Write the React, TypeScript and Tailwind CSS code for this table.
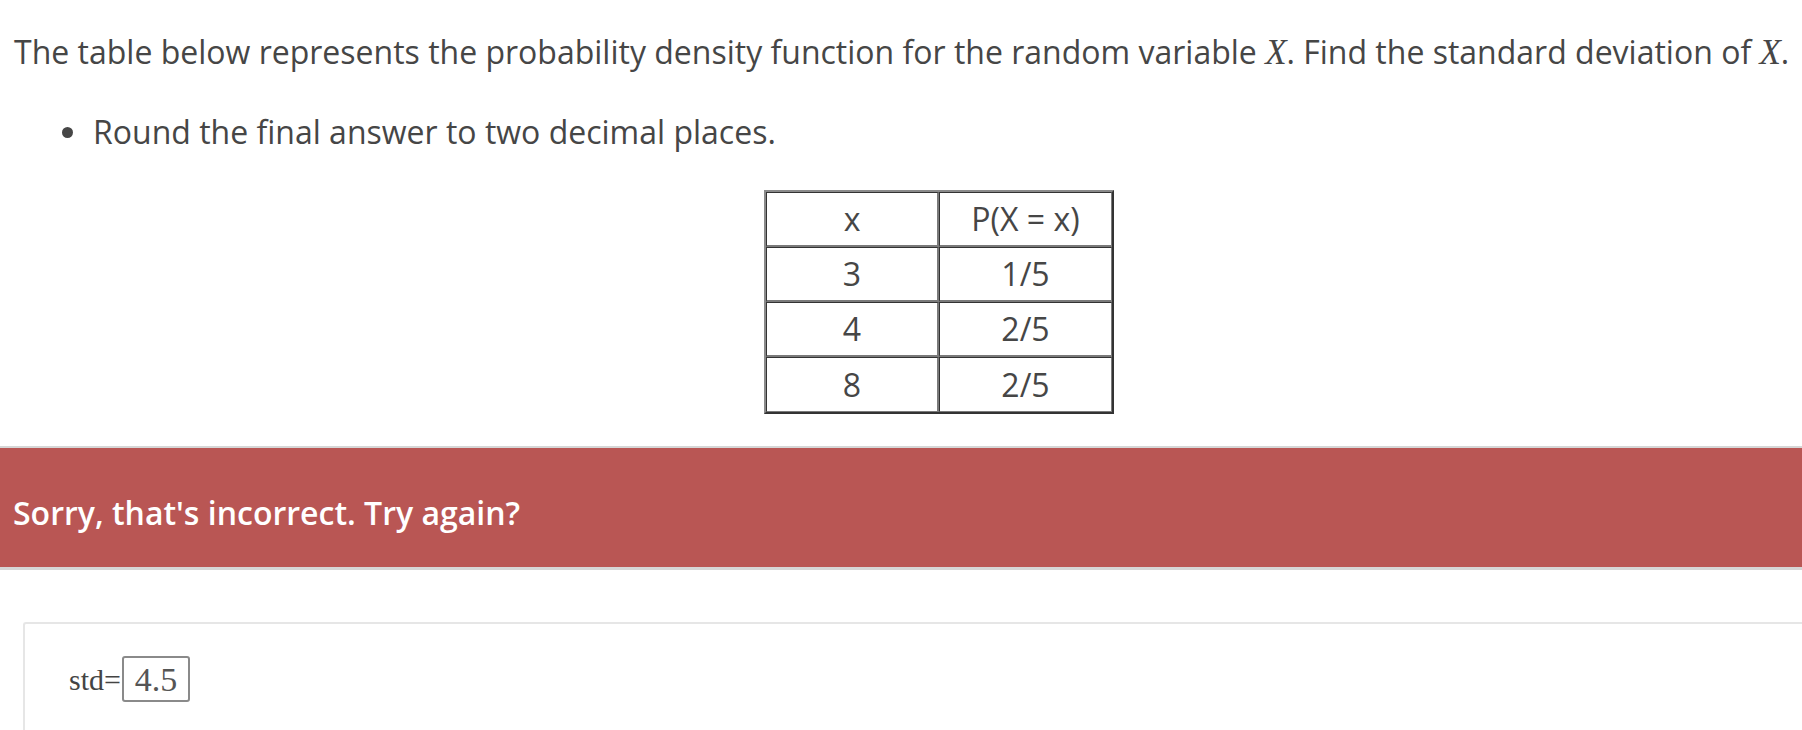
export default function App() {
  const rows = [
    ["3", "1/5"],
    ["4", "2/5"],
    ["8", "2/5"],
  ];
  const cell = "h-[55px] border border-t-[#333] border-l-[#333] border-r-[#7a7a7a] border-b-[#7a7a7a]";
  return (
    <main className="w-[1802px] h-[730px] overflow-hidden bg-white text-[#464646] font-['Open_Sans',sans-serif]">
      <p className="pl-[14px] pt-[30px] text-[32px] leading-[44px] whitespace-nowrap">
        The table below represents the probability density function for the random variable{" "}
        <span className="font-['Liberation_Serif',serif] italic text-[35px]">X</span>. Find the standard deviation of{" "}
        <span className="font-['Liberation_Serif',serif] italic text-[35px]">X</span>.
      </p>
      <ul className="mt-[35px] pl-[62px] text-[32px] leading-[44px]">
        <li className="flex items-center gap-[20px]">
          <span className="w-[11px] h-[11px] rounded-full bg-[#464646]" />
          Round the final answer to two decimal places.
        </li>
      </ul>
      <div className="mt-[36px] ml-[764px]">
        <table className="border-separate border-spacing-0 border-2 border-t-[#8a8a8a] border-l-[#8a8a8a] border-r-[#333] border-b-[#333] text-[32px] text-center">
          <tbody>
            <tr>
              <td className={`w-[173px] ${cell} border-b-2 border-r-2`}>x</td>
              <td className={`w-[173px] ${cell} border-b-2`}>P(X = x)</td>
            </tr>
            {rows.map((r, i) => (
              <tr key={i}>
                <td className={`${cell} border-r-2 ${i < 2 ? "border-b-2" : ""}`}>{r[0]}</td>
                <td className={`${cell} ${i < 2 ? "border-b-2" : ""}`}>{r[1]}</td>
              </tr>
            ))}
          </tbody>
        </table>
      </div>
      <div className="mt-[32px] border-t-2 border-b-[3px] border-[#d6d6d6] bg-[#b95654] h-[124px] flex items-center pl-[13px] pt-[10px]">
        <span className="text-white font-semibold text-[32px]">Sorry, that's incorrect. Try again?</span>
      </div>
      <div className="mt-[52px] ml-[23px] border-2 border-r-0 border-[#e6e6e6] rounded-tl-[3px] h-[200px] pt-[32px] pl-[44px]">
        <div className="flex items-center font-['Liberation_Serif',serif] text-[#444]">
          <span className="text-[30px]">std=</span>
          <span className="ml-[1px] h-[46px] w-[68px] border-2 border-[#8a8a8a] rounded-[3px] flex items-center justify-center text-[34px] text-[#555]">4.5</span>
        </div>
      </div>
    </main>
  );
}
